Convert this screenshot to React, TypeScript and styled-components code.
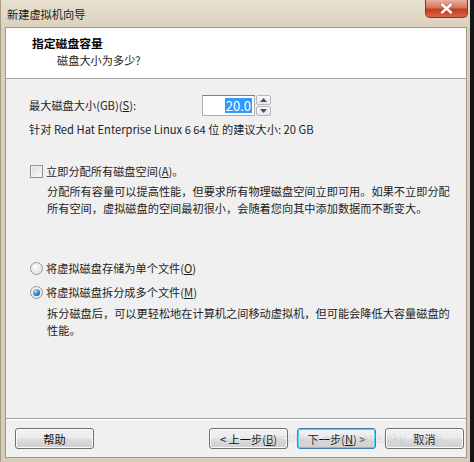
import React from "react";
import styled, { createGlobalStyle } from "styled-components";

const GlobalStyle = createGlobalStyle`
  html, body {
    margin: 0;
    padding: 0;
    background: #161616;
  }
  body {
    font-family: "Noto Sans CJK SC", "Noto Sans", sans-serif;
    font-size: 11.2px;
    color: #1e1e1e;
  }
`;

const Window = styled.div`
  position: relative;
  width: 470px;
  height: 462px;
  box-sizing: border-box;
  background: linear-gradient(#e7e0d0, #d9d0bc 30px, #d6cdb8);
  border-left: 1px solid #a59d8a;
  display: flex;
  flex-direction: column;
`;

const TitleBar = styled.div`
  height: 27px;
  display: flex;
  align-items: center;
  padding-left: 6px;
  font-size: 11.2px;
  color: #1a1a1a;
`;

const CloseButton = styled.div`
  position: absolute;
  top: 0;
  right: 2px;
  width: 43px;
  height: 18px;
  box-sizing: border-box;
  border: 1px solid #7d3a2c;
  border-top: none;
  border-radius: 0 0 5px 5px;
  background: linear-gradient(#eab0a0, #d7735c 45%, #c43b22 55%, #d9654a);
  display: flex;
  align-items: center;
  justify-content: center;
`;

const Client = styled.div`
  margin-left: 4px;
  width: 462px;
  height: 431px;
  box-sizing: border-box;
  border: 1px solid #9f9887;
  background: #f0f0f0;
  display: flex;
  flex-direction: column;
`;

const Header = styled.div`
  height: 51px;
  box-sizing: border-box;
  background: #ffffff;
  border-bottom: 1px solid #a0a0a0;
  padding: 6px 0 0 26px;
`;

const HeaderTitle = styled.div`
  font-weight: bold;
  font-size: 11.8px;
  line-height: 17px;
  color: #000;
`;

const HeaderSub = styled.div`
  line-height: 17px;
  padding-left: 25px;
  margin-top: 1px;
`;

const Body = styled.div`
  flex: 1;
  padding: 15px 0 0 23px;
  display: flex;
  flex-direction: column;
`;

const SizeRow = styled.div`
  display: flex;
  align-items: center;
  height: 22px;
`;

const SizeLabel = styled.div`
  width: 173px;
  line-height: 16px;
`;

const SpinBox = styled.div`
  display: flex;
  align-items: center;
  gap: 1px;
`;

const SpinInput = styled.div`
  width: 53px;
  height: 21px;
  box-sizing: border-box;
  border: 1px solid #abadb3;
  border-top-color: #7a7d85;
  background: #fff;
  display: flex;
  align-items: center;
  justify-content: flex-end;
  padding-right: 2px;
`;

const Selected = styled.span`
  background: #3399ff;
  color: #fff;
  font-size: 13px;
  line-height: 15px;
  padding: 0 1px;
`;

const SpinButtons = styled.div`
  display: flex;
  flex-direction: column;
  gap: 1px;
`;

const SpinArrow = styled.div`
  width: 15px;
  height: 10px;
  box-sizing: border-box;
  border: 1px solid #b5b8c0;
  border-radius: 2px;
  background: linear-gradient(#fafafa, #e6e6e6);
  display: flex;
  align-items: center;
  justify-content: center;
`;

const Line = styled.div<{ $top: number }>`
  margin-top: ${(p) => p.$top}px;
  line-height: 16px;
  white-space: nowrap;
`;

const OptionRow = styled.div<{ $top: number }>`
  margin-top: ${(p) => p.$top}px;
  display: flex;
  align-items: center;
  gap: 3px;
  height: 16px;
  padding-left: 1px;
  white-space: nowrap;
`;

const CheckBox = styled.span`
  width: 13px;
  height: 13px;
  box-sizing: border-box;
  border: 1px solid #8f8f8f;
  background: linear-gradient(135deg, #dcdcdc, #f8f8f8);
  box-shadow: inset 0 0 0 1px #f4f4f4;
`;

const Radio = styled.span`
  width: 13px;
  height: 13px;
  box-sizing: border-box;
  border-radius: 50%;
  border: 1px solid #9a9a9a;
  background: radial-gradient(circle at 40% 35%, #ffffff, #d6d6d6);
  display: flex;
  align-items: center;
  justify-content: center;
`;

const RadioDot = styled.span`
  width: 7px;
  height: 7px;
  border-radius: 50%;
  background: radial-gradient(circle at 35% 30%, #b8e2ff, #2a7fd0 55%, #124f8f);
`;

const Paragraph = styled.div<{ $top: number }>`
  margin-top: ${(p) => p.$top}px;
  padding-left: 18px;
  line-height: 16.5px;
  white-space: nowrap;
`;

const Underline = styled.span`
  text-decoration: underline;
`;

const Footer = styled.div`
  height: 39px;
  box-sizing: border-box;
  border-top: 1px solid #a0a0a0;
  box-shadow: inset 0 1px 0 #ffffff;
  display: flex;
  align-items: flex-start;
  padding: 9px 0 0 9px;
  position: relative;
`;

const ButtonGroup = styled.div`
  margin-left: auto;
  margin-right: 2px;
  display: flex;
  gap: 9px;
`;

const Button = styled.div<{ $focused?: boolean }>`
  width: 79px;
  height: 21px;
  box-sizing: border-box;
  border: 1px solid ${(p) => (p.$focused ? "#3c7fb1" : "#707070")};
  border-radius: 3px;
  background: linear-gradient(#f2f2f2, #ebebeb 48%, #dddddd 52%, #cfcfcf);
  box-shadow: inset 0 0 0 1px ${(p) => (p.$focused ? "#48d8fb" : "#fbfbfb")};
  display: flex;
  align-items: center;
  justify-content: center;
  line-height: 16px;
  color: #111;
`;

const Watermark = styled.div`
  position: absolute;
  left: 250px;
  top: 12px;
  font-family: "Liberation Sans", sans-serif;
  font-size: 13px;
  color: rgba(190, 198, 210, 0.5);
  pointer-events: none;
  white-space: nowrap;
`;

export default function App() {
  return (
    <>
      <GlobalStyle />
      <Window>
        <TitleBar>新建虚拟机向导</TitleBar>
        <CloseButton>
          <svg width="13" height="11" viewBox="0 0 13 11">
            <path d="M2 1.5 L11 9.5 M11 1.5 L2 9.5" stroke="#5a2a22" strokeWidth="3.6" strokeLinecap="round" opacity="0.35" />
            <path d="M2 1.5 L11 9.5 M11 1.5 L2 9.5" stroke="#ffffff" strokeWidth="2.4" strokeLinecap="round" />
          </svg>
        </CloseButton>
        <Client>
          <Header>
            <HeaderTitle>指定磁盘容量</HeaderTitle>
            <HeaderSub>磁盘大小为多少?</HeaderSub>
          </Header>
          <Body>
            <SizeRow>
              <SizeLabel>
                最大磁盘大小(GB)(<Underline>S</Underline>):
              </SizeLabel>
              <SpinBox>
                <SpinInput>
                  <Selected>20.0</Selected>
                </SpinInput>
                <SpinButtons>
                  <SpinArrow>
                    <svg width="7" height="4" viewBox="0 0 7 4">
                      <path d="M0 4 L3.5 0 L7 4 Z" fill="#4d4d4d" />
                    </svg>
                  </SpinArrow>
                  <SpinArrow>
                    <svg width="7" height="4" viewBox="0 0 7 4">
                      <path d="M0 0 L3.5 4 L7 0 Z" fill="#4d4d4d" />
                    </svg>
                  </SpinArrow>
                </SpinButtons>
              </SpinBox>
            </SizeRow>
            <Line $top={5}>针对 Red Hat Enterprise Linux 6 64 位 的建议大小: 20 GB</Line>
            <OptionRow $top={26}>
              <CheckBox />
              <span>
                立即分配所有磁盘空间(<Underline>A</Underline>)。
              </span>
            </OptionRow>
            <Paragraph $top={4}>
              分配所有容量可以提高性能，但要求所有物理磁盘空间立即可用。如果不立即分配
              <br />
              所有空间，虚拟磁盘的空间最初很小，会随着您向其中添加数据而不断变大。
            </Paragraph>
            <OptionRow $top={44}>
              <Radio />
              <span>
                将虚拟磁盘存储为单个文件(<Underline>O</Underline>)
              </span>
            </OptionRow>
            <OptionRow $top={8}>
              <Radio>
                <RadioDot />
              </Radio>
              <span>
                将虚拟磁盘拆分成多个文件(<Underline>M</Underline>)
              </span>
            </OptionRow>
            <Paragraph $top={5}>
              拆分磁盘后，可以更轻松地在计算机之间移动虚拟机，但可能会降低大容量磁盘的
              <br />
              性能。
            </Paragraph>
          </Body>
          <Footer>
            <Button>帮助</Button>
            <ButtonGroup>
              <Button>
                &lt; 上一步(<Underline>B</Underline>)
              </Button>
              <Button $focused>
                下一步(<Underline>N</Underline>) &gt;
              </Button>
              <Button>取消</Button>
            </ButtonGroup>
            <Watermark>https://blog.csdn.net/lucky_yxcai</Watermark>
          </Footer>
        </Client>
      </Window>
    </>
  );
}
